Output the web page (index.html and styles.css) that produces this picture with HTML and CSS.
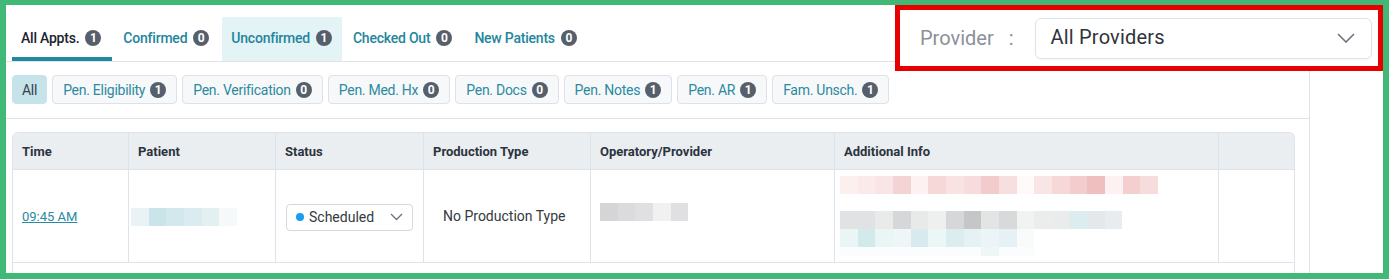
FILE: index.html
```html
<!DOCTYPE html>
<html lang="en">
<head>
<meta charset="utf-8">
<title>Appointments</title>
<link rel="stylesheet" href="styles.css">
</head>
<body>
<div class="frame">
  <div class="panel">
    <div class="tabs">
      <div class="tab active"><span class="tab-label">All Appts.</span><span class="badge">1</span></div>
      <div class="tab"><span class="tab-label">Confirmed</span><span class="badge">0</span></div>
      <div class="tab hover"><span class="tab-label">Unconfirmed</span><span class="badge">1</span></div>
      <div class="tab"><span class="tab-label">Checked Out</span><span class="badge">0</span></div>
      <div class="tab"><span class="tab-label">New Patients</span><span class="badge">0</span></div>
    </div>
    <div class="chips">
      <div class="chip chip-active">All</div>
      <div class="chip">Pen. Eligibility<span class="badge">1</span></div>
      <div class="chip">Pen. Verification<span class="badge">0</span></div>
      <div class="chip">Pen. Med. Hx<span class="badge">0</span></div>
      <div class="chip">Pen. Docs<span class="badge">0</span></div>
      <div class="chip">Pen. Notes<span class="badge">1</span></div>
      <div class="chip">Pen. AR<span class="badge">1</span></div>
      <div class="chip">Fam. Unsch.<span class="badge">1</span></div>
    </div>
    <div class="table-wrap">
      <div class="table">
        <div class="th">Time</div>
        <div class="th">Patient</div>
        <div class="th">Status</div>
        <div class="th">Production Type</div>
        <div class="th">Operatory/Provider</div>
        <div class="th">Additional Info</div>
        <div class="th"></div>

        <div class="td"><a class="time-link" href="#">09:45 AM</a></div>
        <div class="td"><div class="blur blur-patient"></div></div>
        <div class="td td-status">
          <div class="status-select">
            <span class="dot"></span>
            <span class="status-text">Scheduled</span>
            <svg class="status-chev" width="13" height="8" viewBox="0 0 13 8"><polyline points="1,1 6.5,6.5 12,1" fill="none" stroke="#6b7280" stroke-width="1.3"/></svg>
          </div>
        </div>
        <div class="td td-prod">No Production Type</div>
        <div class="td td-op"><div class="blur blur-op"></div></div>
        <div class="td td-info">
          <div class="blur blur-pink"></div>
          <div class="blur blur-gray"></div>
          <div class="blur blur-teal"></div>
          <div class="blur blur-faint"></div>
        </div>
        <div class="td"></div>

        <div class="tfoot"></div>
      </div>
    </div>
  </div>

  <div class="provider-box">
    <span class="provider-label">Provider</span>
    <span class="provider-colon">:</span>
    <div class="provider-select">
      <span class="provider-value">All Providers</span>
      <svg class="provider-chev" width="18" height="10" viewBox="0 0 18 10"><polyline points="1,1 9,9 17,1" fill="none" stroke="#6b7280" stroke-width="1.6"/></svg>
    </div>
  </div>
</div>
</body>
</html>
```

FILE: styles.css
```css
html, body {
  margin: 0;
  padding: 0;
  background: #ffffff;
}

.frame {
  position: relative;
  width: 1389px;
  height: 279px;
  box-sizing: border-box;
  border: 6px solid #41b976;
  border-top-width: 5px;
  background: #ffffff;
  overflow: hidden;
  font-family: Roboto, "Liberation Sans", Arial, sans-serif;
}

.panel {
  width: 1304px;
  height: 100%;
  box-sizing: border-box;
  border-right: 1px solid #dfe3e8;
}

/* Tabs */
.tabs {
  display: flex;
  align-items: stretch;
  padding: 12px 0 0 6px;
  border-bottom: 1px solid #dfe3e8;
}

.tab {
  height: 44px;
  box-sizing: border-box;
  display: flex;
  align-items: center;
  padding: 0 11px 2px 9px;
  margin-right: 2px;
  font-size: 14px;
  font-weight: 500;
  color: #23869c;
  letter-spacing: -0.22px;
}

.tab.active {
  color: #1d2430;
  border-bottom: 4px solid #21899f;
  padding-top: 2px;
  padding-bottom: 0;
}

.tab.hover {
  background: #e4f3f6;
  padding-right: 10px;
}

.badge {
  display: inline-flex;
  align-items: center;
  justify-content: center;
  width: 16px;
  height: 16px;
  border-radius: 50%;
  background: #565f6b;
  color: #ffffff;
  font-size: 12px;
  font-weight: 700;
  margin-left: 6px;
  line-height: 1;
  letter-spacing: 0;
}

/* Filter chips */
.chips {
  display: flex;
  gap: 5px;
  padding: 13px 0 14px 6px;
  border-bottom: 1px solid #dfe3e8;
}

.chip {
  height: 29px;
  box-sizing: border-box;
  display: flex;
  align-items: center;
  padding: 0 10px;
  border: 1px solid #dde2e8;
  border-radius: 4px;
  background: #f6f8fa;
  color: #2d8aa0;
  font-size: 14px;
  letter-spacing: -0.27px;
}

.chip .badge {
  margin-left: 5px;
}

.chip-active {
  background: #c6e3ea;
  border-color: #c6e3ea;
  color: #34414d;
  padding: 0 9px;
}

/* Table */
.table-wrap {
  padding: 13px 0 0 6px;
}

.table {
  display: grid;
  grid-template-columns: 116px 147px 148px 167px 244px 384px 76px;
  width: 1283px;
  box-sizing: border-box;
  border: 1px solid #dde3ea;
  border-bottom: none;
  border-radius: 6px 6px 0 0;
  overflow: hidden;
}

.th {
  height: 37px;
  box-sizing: border-box;
  display: flex;
  align-items: center;
  padding-left: 9px;
  background: #ebeef1;
  border-right: 1px solid #dde3ea;
  border-bottom: 1px solid #dde3ea;
  font-size: 13px;
  font-weight: 700;
  color: #2b3440;
}

.th:nth-child(7) {
  border-right: none;
}

.td {
  height: 93px;
  box-sizing: border-box;
  display: flex;
  align-items: center;
  padding-left: 9px;
  border-right: 1px solid #dde3ea;
  border-bottom: 1px solid #dde3ea;
  font-size: 14px;
  color: #333a40;
}

.td:nth-child(14) {
  border-right: none;
}

.tfoot {
  grid-column: 1 / -1;
  height: 20px;
}

.time-link {
  color: #2a8aa0;
  font-size: 13px;
  text-decoration: underline;
  margin-top: 1px;
}

.blur {
  flex: none;
}

.blur-patient {
  width: 106px;
  height: 18px;
  margin-left: -7px;
  margin-top: 1px;
  background: linear-gradient(90deg, #e9f3f5 0 18px, #cbe4e9 18px 35px, #d3e8ec 35px 53px, #daecef 53px 71px, #e3f0f2 71px 88px, #f5f9fa 88px 106px);
}

.td-status {
  padding-left: 10px;
}

.status-select {
  width: 127px;
  height: 27px;
  box-sizing: border-box;
  display: flex;
  align-items: center;
  padding: 0 9px 0 9px;
  border: 1px solid #d3d9df;
  border-radius: 4px;
  background: #ffffff;
  margin-top: 2px;
}

.dot {
  width: 8px;
  height: 8px;
  border-radius: 50%;
  background: #1a9cf2;
  margin-right: 5px;
}

.status-text {
  font-size: 14px;
  color: #333a40;
  flex: 1;
}

.status-chev {
  display: block;
}

.td-prod {
  padding-left: 19px;
  color: #333a40;
}

.blur-op {
  width: 88px;
  height: 18px;
  margin-bottom: 9px;
  background: linear-gradient(90deg, #d5d5d7 0 18px, #dbdbdd 18px 35px, #e0e0e2 35px 53px, #f1f1f2 53px 71px, #e0e0e2 71px 88px);
}

.td-info {
  flex-direction: column;
  align-items: flex-start;
  justify-content: flex-start;
  padding: 6px 0 0 5px;
}

.blur-pink {
  width: 318px;
  height: 18px;
  margin-bottom: 17px;
  background: linear-gradient(90deg, #fcf0ef 0 18px, #faeaea 18px 35px, #f9e5e5 35px 53px, #f4d3d4 53px 71px, #fdf2f1 71px 88px, #f6d8d8 88px 106px, #f8e2e2 106px 124px, #f6dcdd 124px 141px, #f2cccd 141px 159px, #f7dfdf 159px 177px, #fffafa 177px 194px, #f8e5e5 194px 212px, #f6d8d9 212px 230px, #f3cdcd 230px 247px, #efbebe 247px 265px, #fdf1f1 265px 283px, #f3cfcf 283px 300px, #f6dcdc 300px 318px);
}

.blur-gray {
  width: 282px;
  height: 18px;
  background: linear-gradient(90deg, #e1e2e3 0 35px, #e9eaea 35px 53px, #d6d7d8 53px 71px, #e8e9e9 71px 88px, #eeefef 88px 106px, #d6d7d8 106px 124px, #c5c6c7 124px 141px, #e3e4e4 141px 159px, #d8d9da 159px 177px, #f1f2f2 177px 194px, #ebecec 194px 212px, #eaebec 212px 230px, #dcedf0 230px 247px, #e4e8ea 247px 265px, #e8ecee 265px 282px);
}

.blur-teal {
  width: 194px;
  height: 18px;
  background: linear-gradient(90deg, #eaf5f6 0 18px, #d3eaec 18px 35px, #eaf6f6 35px 53px, #eef6f7 53px 71px, #d9eaee 71px 88px, #ebf6f6 88px 106px, #dcedf0 106px 124px, #e6f1f5 124px 141px, #ebf4f6 141px 159px, #e6f1f5 159px 177px, #f9fbfb 177px 194px);
}

.blur-faint {
  width: 194px;
  height: 9px;
  background: linear-gradient(90deg, #fafcfd 0 141px, #eef6f7 141px 159px, #fafcfd 159px 194px);
}

/* Provider annotation box (overlay) */
.provider-box {
  position: absolute;
  left: 889px;
  top: 0;
  width: 488px;
  height: 66px;
  box-sizing: border-box;
  border: 5px solid #e60000;
  background: #ffffff;
  display: flex;
  align-items: center;
  padding: 0 6px 0 20px;
}

.provider-label {
  font-size: 20px;
  color: #8b9099;
}

.provider-colon {
  font-size: 20px;
  color: #8b9099;
  margin-left: 15px;
  margin-right: 21px;
}

.provider-select {
  flex: 1;
  height: 41px;
  box-sizing: border-box;
  display: flex;
  align-items: center;
  justify-content: space-between;
  padding: 0 16px 2px 15px;
  border: 1px solid #dde3ea;
  border-radius: 6px;
  box-shadow: 0 1px 2px rgba(0, 0, 0, 0.04);
}

.provider-value {
  font-size: 20px;
  color: #2f343a;
  letter-spacing: 0.2px;
}

.provider-chev {
  display: block;
  margin-top: 2px;
}
```
